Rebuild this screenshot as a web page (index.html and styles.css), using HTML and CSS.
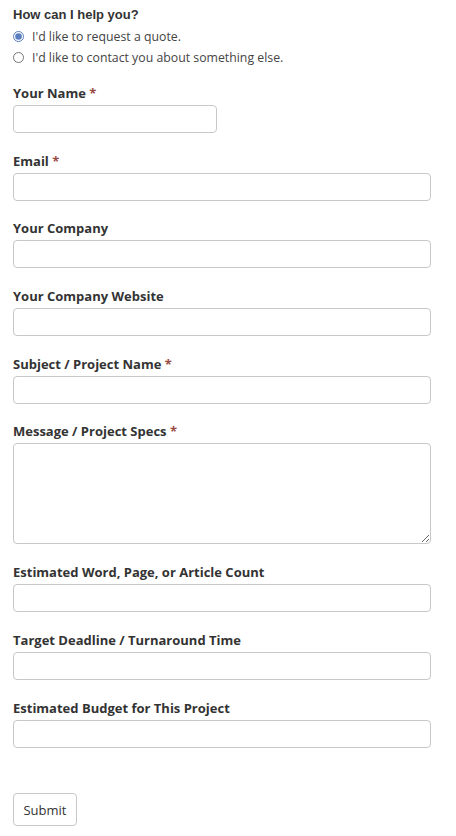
FILE: index.html
```html
<!DOCTYPE html>
<html>
<head>
    <meta charset="UTF-8">
    <meta name="viewport" content="width=device-width, initial-scale=1.0">
    <title>Contact</title>
    <link rel="stylesheet" href="styles.css">
</head>
<body>
    <form class="contact-form">
        <!-- Request type -->
        <div class="choice">
            <div class="choice-title">How can I help you?</div>
            <label class="radio"><input type="radio" name="kind" checked> I'd like to request a quote.</label>
            <label class="radio"><input type="radio" name="kind"> I'd like to contact you about something else.</label>
        </div>

        <div class="field">
            <label>Your Name <span class="req">*</span></label>
            <input type="text" class="short">
        </div>
        <div class="field">
            <label>Email <span class="req">*</span></label>
            <input type="text">
        </div>
        <div class="field">
            <label>Your Company</label>
            <input type="text">
        </div>
        <div class="field">
            <label>Your Company Website</label>
            <input type="text">
        </div>
        <div class="field">
            <label>Subject / Project Name <span class="req">*</span></label>
            <input type="text">
        </div>
        <div class="field">
            <label>Message / Project Specs <span class="req">*</span></label>
            <textarea></textarea>
        </div>
        <div class="field">
            <label>Estimated Word, Page, or Article Count</label>
            <input type="text">
        </div>
        <div class="field">
            <label>Target Deadline / Turnaround Time</label>
            <input type="text">
        </div>
        <div class="field">
            <label>Estimated Budget for This Project</label>
            <input type="text">
        </div>

        <button type="button" class="submit-btn">Submit</button>
    </form>
</body>
</html>
```

FILE: styles.css
```css
body {
    margin: 0;
    padding: 0;
    background: #fff;
    font-family: 'Open Sans', sans-serif;
    color: #333;
}
.contact-form {
    width: 418px;
    padding: 6px 13px 10px;
}
.choice {
    margin-bottom: 16px;
}
.choice-title {
    font-family: 'Liberation Sans', Arial, sans-serif;
    font-weight: bold;
    font-size: 13px;
    line-height: 18px;
    margin-bottom: 2px;
}
.radio {
    display: flex;
    align-items: center;
    font-size: 12.3px;
    line-height: 21px;
    color: #444;
}
.radio input {
    width: 11px;
    height: 11px;
    margin: 0 8px 0 0;
    accent-color: #5a7dbf;
}
.field {
    margin-bottom: 18.7px;
}
.field label {
    display: block;
    font-weight: bold;
    font-size: 13px;
    line-height: 18px;
    margin-bottom: 3px;
}
.req {
    color: #9a4a44;
}
.field input,
.field textarea {
    display: block;
    box-sizing: border-box;
    width: 418px;
    height: 28px;
    margin: 0;
    border: 1px solid #c8c8c8;
    border-radius: 4px;
    background: #fff;
    font-family: inherit;
    font-size: 13px;
}
.field input.short {
    width: 204px;
}
.field textarea {
    height: 101px;
    resize: vertical;
}
.submit-btn {
    margin-top: 27px;
    width: 64px;
    height: 33px;
    background: #fff;
    border: 1px solid #c8c8c8;
    border-radius: 4px;
    font-family: 'Open Sans', sans-serif;
    font-size: 13px;
    color: #333;
}
```
